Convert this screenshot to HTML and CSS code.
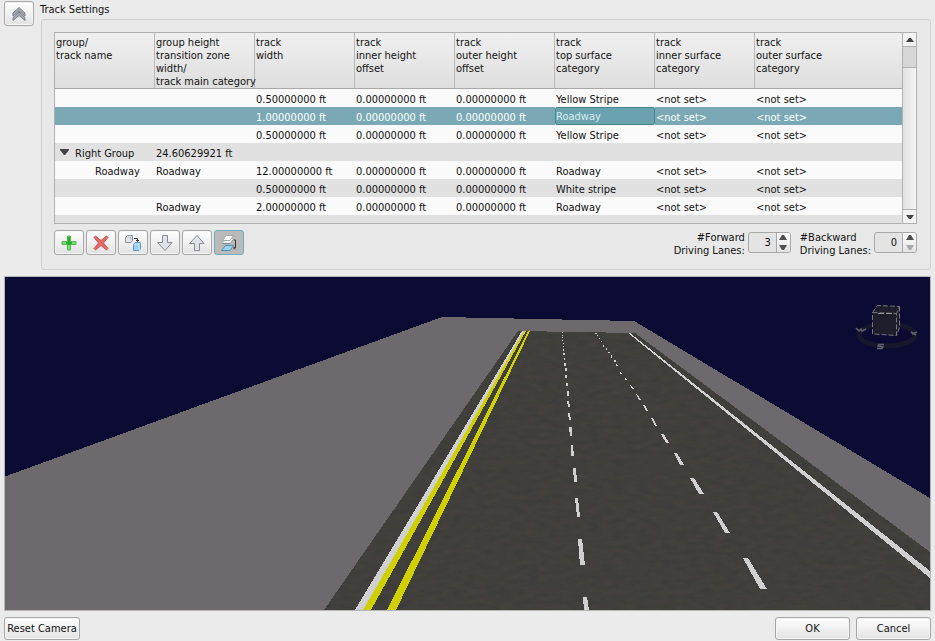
FILE: index.html
```html
<!DOCTYPE html>
<html lang="en">
<head>
<meta charset="utf-8">
<title>Track Settings</title>
<link rel="stylesheet" href="styles.css">
</head>
<body>
<main class="dialog">
  <section class="settings">
    <button class="btn collapse" type="button" aria-label="Collapse">
      <svg width="16" height="16" viewBox="0 0 16 16"><g fill="#a4a8b0" stroke="#7b8089"><path d="M8 1.500l6 5.500v3L8 5 2 10V7z"/><path d="M8 6l6 5.500v3L8 9.500 2 14.500v-3z"/></g></svg>
    </button>
    <div class="settings-body">
      <h1 class="title">Track Settings</h1>
      <div class="frame">
        <div class="tree">
          <div class="tree-view">
            <table class="tracks">
              <colgroup><col class="c"><col class="c"><col class="c"><col class="c"><col class="c"><col class="c"><col class="c"><col></colgroup>
              <thead>
                <tr>
                  <th>group/<br>track name</th>
                  <th>group height<br>transition zone<br>width/<br>track main category</th>
                  <th>track<br>width</th>
                  <th>track<br>inner height<br>offset</th>
                  <th>track<br>outer height<br>offset</th>
                  <th>track<br>top surface<br>category</th>
                  <th>track<br>inner surface<br>category</th>
                  <th>track<br>outer surface<br>category</th>
                </tr>
              </thead>
              <tbody>
                <tr><td></td><td></td><td>0.50000000 ft</td><td>0.00000000 ft</td><td>0.00000000 ft</td><td>Yellow Stripe</td><td>&lt;not set&gt;</td><td>&lt;not set&gt;</td></tr>
                <tr class="selected"><td></td><td></td><td>1.00000000 ft</td><td>0.00000000 ft</td><td>0.00000000 ft</td><td class="current">Roadway</td><td>&lt;not set&gt;</td><td>&lt;not set&gt;</td></tr>
                <tr><td></td><td></td><td>0.50000000 ft</td><td>0.00000000 ft</td><td>0.00000000 ft</td><td>Yellow Stripe</td><td>&lt;not set&gt;</td><td>&lt;not set&gt;</td></tr>
                <tr><td class="group"><svg class="twisty" width="9" height="6" viewBox="0 0 9 6"><path d="M0 0h9v1L5 6H4L0 1z" fill="#444"/></svg>Right Group</td><td>24.60629921 ft</td><td></td><td></td><td></td><td></td><td></td><td></td></tr>
                <tr><td class="child">Roadway</td><td>Roadway</td><td>12.00000000 ft</td><td>0.00000000 ft</td><td>0.00000000 ft</td><td>Roadway</td><td>&lt;not set&gt;</td><td>&lt;not set&gt;</td></tr>
                <tr><td></td><td></td><td>0.50000000 ft</td><td>0.00000000 ft</td><td>0.00000000 ft</td><td>White stripe</td><td>&lt;not set&gt;</td><td>&lt;not set&gt;</td></tr>
                <tr><td></td><td>Roadway</td><td>2.00000000 ft</td><td>0.00000000 ft</td><td>0.00000000 ft</td><td>Roadway</td><td>&lt;not set&gt;</td><td>&lt;not set&gt;</td></tr>
                <tr><td></td><td></td><td></td><td></td><td></td><td></td><td></td><td></td></tr>
              </tbody>
            </table>
          </div>
          <div class="scrollbar">
            <button class="sb-btn" type="button" aria-label="Scroll up"><svg width="8" height="4" viewBox="0 0 8 4"><path d="M0 4L3 0h2l3 4z" fill="#444"/></svg></button>
            <div class="sb-track"><div class="sb-thumb"></div></div>
            <button class="sb-btn down" type="button" aria-label="Scroll down"><svg width="8" height="4" viewBox="0 0 8 4"><path d="M0 0h8L5 4H3z" fill="#444"/></svg></button>
          </div>
        </div>
        <div class="controls">
          <div class="tools">
            <button class="btn tool" type="button" aria-label="Add"><svg width="16" height="16" viewBox="0 0 16 16"><path d="M6.500 1v5.500H1v3h5.500V15h3V9.500H15v-3H9.500V1z" fill="#7bdc78" stroke="#56b354" stroke-linejoin="round"/><path d="M8 2v8M5 8h6" stroke="#22b324" stroke-width="2"/></svg></button>
            <button class="btn tool" type="button" aria-label="Delete"><svg width="16" height="16" viewBox="0 0 16 16"><path d="M1 2.500L2.500 1 8 5.500 13.500 1 15 2.500 10.500 8l4.500 5.500-1.500 1.500L8 10.500 2.500 15 1 13.500 5.500 8z" fill="#e66a68" stroke="#bd5a5a" stroke-linejoin="round"/></svg></button>
            <button class="btn tool" type="button" aria-label="Duplicate"><svg width="16" height="16" viewBox="0 0 16 16"><path d="M.5 2.500L2.500.5h5v5L6 7.500H.5z" fill="#e4e7ec" stroke="#8b8f98"/><path d="M1 2.500h5v5M6 2.500l1.500-2" fill="none" stroke="#b4b8c0" stroke-width=".7"/><path d="M9 3.500h3.500V6m-1.500-1l1.500 1.500L14 5" fill="none" stroke="#333"/><path d="M8.500 9.500l1.500-2h5.500v6L14 15.500H8.500z" fill="#9bd0f0" stroke="#5b97bd"/><path d="M9 9.500h5v5.500m0-5.500l1.500-2" fill="none" stroke="#d3edfc" stroke-width=".8"/></svg></button>
            <button class="btn tool" type="button" aria-label="Move down"><svg width="16" height="16" viewBox="0 0 16 16"><path d="M5.500.5h5v7h4.500L8 15.500.5 7.500h5z" fill="#dfe3e8" stroke="#858a92" stroke-linejoin="round"/></svg></button>
            <button class="btn tool" type="button" aria-label="Move up"><svg width="16" height="16" viewBox="0 0 16 16"><path d="M5.500 15.500h5v-7h4.500L8 .5.500 8.500h5z" fill="#dfe3e8" stroke="#858a92" stroke-linejoin="round"/></svg></button>
            <button class="btn tool pressed" type="button" aria-label="Show layers" aria-pressed="true"><svg width="16" height="16" viewBox="0 0 16 16"><path d="M4.500 10.500h8L9 15.500H.5z" fill="#9bd1f3" stroke="#568eaf"/><path d="M1.500 8.500h7.500L12.500 4" fill="none" stroke="#82868c"/><path d="M2 8l3-4h7L9 8z" fill="#fafafa"/><path d="M5 .5h7.500L9 5.500H1.500z" fill="#fafafa" stroke="#a2a6ab"/><path d="M13 5h1.500v8H13m1-1.500L12.500 13l1.500 1.500" fill="none" stroke="#333"/></svg></button>
          </div>
          <div class="lanes">
            <label class="lane-label right" for="fwd">#Forward<br>Driving Lanes:</label>
            <div class="spin"><input id="fwd" type="text" inputmode="numeric" value="3"><div class="steps"><button type="button" aria-label="More forward lanes"><svg width="8" height="5" viewBox="0 0 8 5"><path d="M0 5L3 0h2l3 5z" fill="#505050"/></svg></button><button type="button" aria-label="Fewer forward lanes"><svg width="8" height="5" viewBox="0 0 8 5"><path d="M0 0h8L5 5H3z" fill="#505050"/></svg></button></div></div>
            <label class="lane-label second" for="bwd">#Backward<br>Driving Lanes:</label>
            <div class="spin"><input id="bwd" type="text" inputmode="numeric" value="0"><div class="steps"><button type="button" aria-label="More backward lanes"><svg width="8" height="5" viewBox="0 0 8 5"><path d="M0 5L3 0h2l3 5z" fill="#505050"/></svg></button><button type="button" aria-label="Fewer backward lanes" disabled><svg width="8" height="5" viewBox="0 0 8 5"><path d="M0 0h8L5 5H3z" fill="#aaa"/></svg></button></div></div>
          </div>
        </div>
      </div>
    </div>
  </section>
  <div class="viewport">
    <svg class="scene" viewBox="5 277 925 333" preserveAspectRatio="xMidYMid slice" role="img" aria-label="Road preview">
      <defs>
        <filter id="grain" x="0" y="0" width="100%" height="100%" color-interpolation-filters="sRGB">
          <feTurbulence type="fractalNoise" baseFrequency=".08 .2" numOctaves="3" seed="4"/>
          <feColorMatrix values=".06 0 0 0 .222  .03 .02 0 0 .222  .02 0 .03 0 .207  0 0 0 0 1"/>
          <feComposite in2="SourceGraphic" operator="in"/>
        </filter>
      </defs>
      <g shape-rendering="crispEdges">
        <path d="M0 270h940v345H0z" fill="#0a0a32"/>
        <path d="M5 476.500L442 317l192 4 296 177v112H5z" fill="#6d696d"/>
        <path d="M518 331l117 2 295 219v58H324z" fill="#403f3b" filter="url(#grain)"/>
        <path d="M522 331h3L364 610h-9z" fill="#d0d0d0"/>
        <path d="M524 331h2L371 610h-8z" fill="#d0d000"/>
        <path d="M528 331h2L396 610h-9z" fill="#d0d000"/>
        <path d="M628 333h2l300 238v7z" fill="#d0d0d0"/>
        <g fill="#d0d0d0">
          <path d="M562 332h1v1h-1zM562 335h1v1h-1zM562 337h1v1h-1zM562 340h1v1h-1zM563 343h1v1h-1zM563 346h1v1h-1zM563 349h1v2h-1zM563 353h2v2h-2zM564 358h1v2h-1zM564 363h2v3h-2zM565 368h2v3h-2zM565 375h2v3h-2zM566 383h2v3h-2zM567 391h2v5h-2zM567 401h2l1 6h-2zM568 413h2l1 7h-2zM569 427h3v9h-2zM571 445h2l1 11h-3zM573 468h3l1 14h-3zM575 498h3l2 19h-3zM578 539h4l3 26h-5zM583 597h4l2 13h-5z"/>
          <path d="M595 333h2v1h-2zM597 335h1v1h-1zM599 338h1v1h-1zM601 341h1v1h-1zM603 345h1v2h-1zM606 348h1v2h-1zM608 352h2v1h-2zM611 355h1v3h-1zM614 360h2v2h-2zM616 364l2 2h-2zM620 371l2 3h-2zM625 377l2 3h-2zM630 385h1l3 4h-2zM636 394h1l4 6h-2zM643 405h2l3 6h-2zM651 418h2l4 8h-2zM661 434h3l5 9h-3zM674 453h3l7 12h-4zM690 478h4l10 16h-5zM713 512h4l13 21h-5zM743 558h5l19 31h-7z"/>
        </g>
      </g>
      <g fill="none">
        <ellipse cx="887" cy="335" rx="28" ry="11" stroke="#17172b" stroke-width="5"/>
        <path d="M873 312l5-7 22 2-1 21-2 8-24-2z" fill="#1d1d2b"/>
        <path d="M872.500 312.500l24 1v22l-24-1.500zM872.500 312.500l5-7 22 1-3 7M899.500 306.500v21l-3 8" stroke="#77777d" stroke-dasharray="5 2"/>
        <path d="M878 313.500h14" stroke="#999" stroke-dasharray="6 2"/>
        <path d="M856 328l3 3 2-2 1 2 4-2M884 344.500h-5l-1 1.500 5 1-1 1.500h-5M911 332l5 3m-4-1l5-2" stroke="#62626f" stroke-width="1.500"/>
      </g>
    </svg>
  </div>
  <footer class="footer">
    <button class="btn reset" type="button">Reset Camera</button>
    <button class="btn action" type="button">OK</button>
    <button class="btn action" type="button">Cancel</button>
  </footer>
</main>
</body>
</html>
```
FILE: styles.css
```css
* { box-sizing: border-box; }
body { margin: 0; background: #ebebeb; color: #111; font: 11px/13px "DejaVu Sans Condensed", "Noto Sans", sans-serif; }
button, input { font: inherit; color: inherit; }
svg { display: block; }
.dialog { display: flex; flex-direction: column; min-height: 100vh; padding: 0 4px; }
.settings { display: flex; gap: 6px; }
.btn { display: flex; align-items: center; justify-content: center; padding: 0; border: 1px solid #a6a6a6; border-radius: 3px; background: linear-gradient(#fff, #e2e2e2); box-shadow: inset 0 0 0 1px #f5f5f5; }
.collapse { width: 30px; height: 25px; margin-top: 1px; flex: none; }
.settings-body { flex: 1; min-width: 0; }
.title { margin: 0; padding-top: 3px; height: 19px; font-size: 11px; font-weight: normal; line-height: 13px; }
.frame { margin-left: 1px; padding: 12px 13px 12px 12px; border: 1px solid #d2d2d2; border-radius: 3px; background: #e8e8e8; }
.tree { display: flex; height: 192px; border: 1px solid #b0b0b0; }
.tree-view { flex: 1; min-width: 0; overflow: hidden; background: #e1e1e1; }
.tracks { width: 100%; table-layout: fixed; border-collapse: separate; border-spacing: 0; }
.c { width: 100px; }
th { height: 56px; padding: 3px 0 0 1px; text-align: left; vertical-align: top; font-weight: normal; white-space: nowrap; background: linear-gradient(#f0f0f0, #dedede); border-bottom: 1px solid #a8a8a8; }
th:not(:last-child) { border-right: 1px solid #b8b8b8; }
td { height: 18px; padding: 2px 0 0 1px; white-space: nowrap; background: #fafafa; }
tr:nth-child(4) td, tr:nth-child(6) td, tr:nth-child(8) td { background: #e1e1e1; }
.selected td { background: #7aa9b5; color: #fff; }
.selected td.current { padding: 1px 0 0; background: #6aa2af; border: 1px solid #4c8693; border-radius: 2px; color: #d8edf2; }
.twisty { display: inline-block; margin: 0 6px 2px 4px; }
td.child { padding-left: 40px; }
.scrollbar { display: flex; flex-direction: column; width: 14px; border-left: 1px solid #b0b0b0; background: #eee; }
.sb-btn { display: flex; align-items: center; justify-content: center; height: 14px; padding: 0; border: 0; border-bottom: 1px solid #b0b0b0; background: #f2f2f2; }
.sb-btn.down { border-bottom: 0; border-top: 1px solid #b0b0b0; }
.sb-track { flex: 1; background: linear-gradient(90deg, #e2e2e2, #f5f5f5); }
.sb-thumb { height: 21px; background: #d7d7d7; border-bottom: 1px solid #b0b0b0; }
.controls { display: flex; justify-content: space-between; padding-top: 6px; height: 33px; }
.tools { display: flex; gap: 2px; }
.tool { width: 30px; height: 25px; }
.pressed { background: #bababa; border-color: #6cb0c0; box-shadow: none; }
.lanes { display: flex; align-items: flex-start; }
.lane-label { padding-top: 1px; margin-right: 3px; white-space: nowrap; }
.right { text-align: right; }
.second { margin-left: 9px; }
.spin { display: flex; width: 43px; height: 21px; margin-top: 2px; border: 1px solid #a8a8a8; border-radius: 3px; overflow: hidden; background: #e4e4e4; }
.spin input { flex: 1; min-width: 0; padding: 0 5px 0 0; border: 0; background: transparent; text-align: right; }
.steps { display: flex; flex-direction: column; width: 14px; border-left: 1px solid #a8a8a8; background: linear-gradient(#fff, #e2e2e2); }
.steps button { flex: 1; display: flex; align-items: center; justify-content: center; padding: 0; border: 0; background: none; }
.viewport { flex: 1; display: flex; min-height: 200px; margin-top: 6px; border: 1px solid #b5b5b5; background: #0a0a32; }
.scene { flex: 1; width: 100%; min-width: 0; min-height: 0; height: auto; }
.footer { display: flex; gap: 6px; padding: 6px 0 1px; }
.footer .btn { height: 23px; }
.reset { width: 76px; margin-right: auto; }
.action { width: 75px; }
```
